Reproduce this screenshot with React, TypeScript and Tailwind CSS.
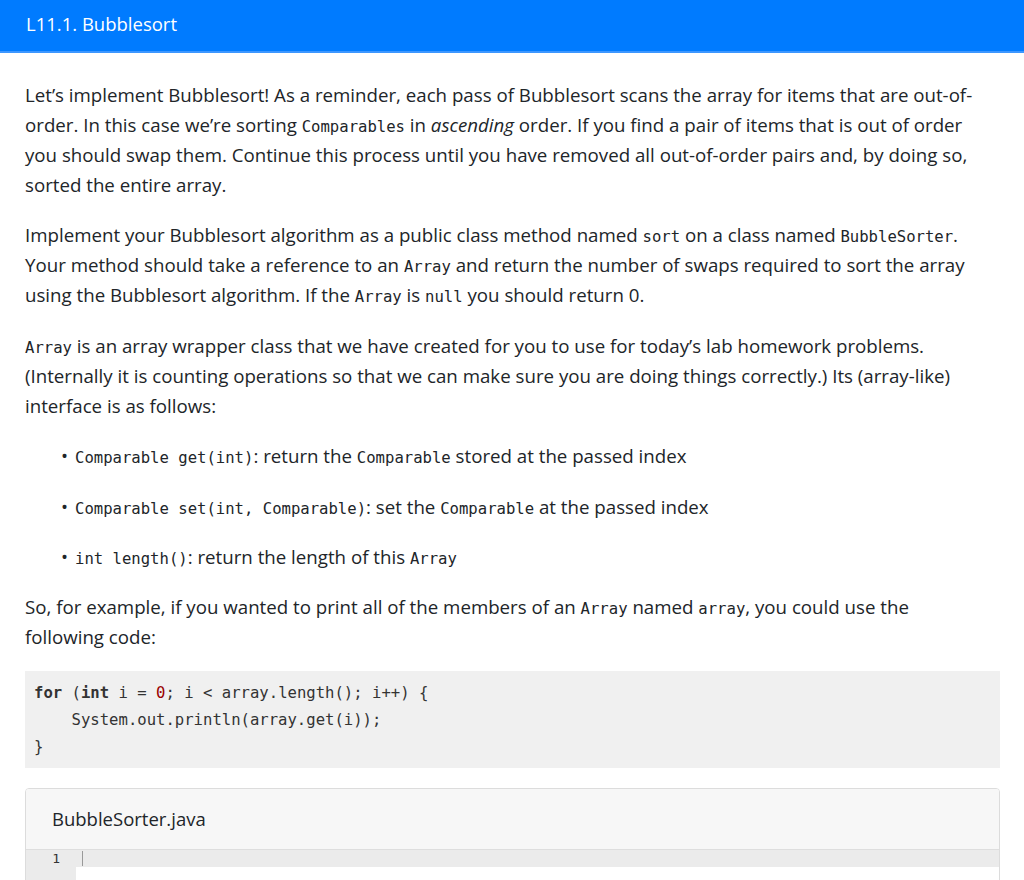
import React from "react";

const C = ({ children }: { children: React.ReactNode }) => (
  <code className="font-['DejaVu_Sans_Mono',monospace] text-[15.6px] leading-none">{children}</code>
);

export default function App() {
  return (
    <div className="w-[1024px] h-[880px] overflow-hidden bg-white font-['Open_Sans',sans-serif] text-[#212529]">
      <div className="h-[53px] bg-[#007bff] border-b-2 border-[#3d97ff] flex items-start pt-[10px] px-[26px]">
        <span className="text-white text-[18.5px]">L11.1. Bubblesort</span>
      </div>
      <div className="pl-[25px] pr-[24px] pt-[27px] text-[18.7px] leading-[30px]">
        <p className="mb-[20px]">
          Let’s implement Bubblesort! As a reminder, each pass of Bubblesort scans the array for items that are out-of-
          <br />
          order. In this case we’re sorting <C>Comparables</C> in <em>ascending</em> order. If you find a pair of items that is out of order
          <br />
          you should swap them. Continue this process until you have removed all out-of-order pairs and, by doing so,
          <br />
          sorted the entire array.
        </p>
        <p className="mb-[21px]">
          Implement your Bubblesort algorithm as a public class method named <C>sort</C> on a class named <C>BubbleSorter</C>.
          <br />
          Your method should take a reference to an <C>Array</C> and return the number of swaps required to sort the array
          <br />
          using the Bubblesort algorithm. If the <C>Array</C> is <C>null</C> you should return 0.
        </p>
        <p className="mb-[20px]">
          <C>Array</C> is an array wrapper class that we have created for you to use for today’s lab homework problems.
          <br />
          (Internally it is counting operations so that we can make sure you are doing things correctly.) Its (array-like)
          <br />
          interface is as follows:
        </p>
        <ul className="mb-[20px] pl-[36px] flex flex-col gap-[20.5px]">
          <li className="flex items-start">
            <span className="w-[14px] shrink-0">•</span>
            <span>
              <C>Comparable get(int)</C>: return the <C>Comparable</C> stored at the passed index
            </span>
          </li>
          <li className="flex items-start">
            <span className="w-[14px] shrink-0">•</span>
            <span>
              <C>Comparable set(int, Comparable)</C>: set the <C>Comparable</C> at the passed index
            </span>
          </li>
          <li className="flex items-start">
            <span className="w-[14px] shrink-0">•</span>
            <span>
              <C>int length()</C>: return the length of this <C>Array</C>
            </span>
          </li>
        </ul>
        <p className="mb-[19px]">
          So, for example, if you wanted to print all of the members of an <C>Array</C> named <C>array</C>, you could use the
          <br />
          following code:
        </p>
        <pre className="bg-[#f0f0f0] px-[9px] pt-[9px] pb-[7px] font-['DejaVu_Sans_Mono',monospace] text-[15.6px] leading-[27px] text-[#333]">
          <span className="font-bold">for</span> (<span className="font-bold">int</span> i = <span className="text-[#990000]">0</span>; i &lt; array.length(); i++) {"{"}
          {"\n"}    System.out.println(array.get(i));
          {"\n"}{"}"}
        </pre>
        <div className="mt-[20px] border border-[#dcdcdc] rounded-[4px] overflow-hidden">
          <div className="h-[61px] bg-[#f7f7f7] border-b border-[#dedede] flex items-center px-[26px] text-[18.5px]">
            BubbleSorter.java
          </div>
          <div className="flex h-[40px]">
            <div className="w-[50px] bg-[#ebebeb] flex flex-col">
              <div className="h-[17px] text-right pr-[16px] font-['DejaVu_Sans_Mono',monospace] text-[13px] leading-[17px] text-[#333]">1</div>
            </div>
            <div className="flex-1 flex flex-col">
              <div className="h-[17px] bg-[#ebebeb] pl-[6px] flex items-center">
                <div className="w-[1px] h-[15px] bg-[#999]" />
              </div>
            </div>
          </div>
        </div>
      </div>
    </div>
  );
}
